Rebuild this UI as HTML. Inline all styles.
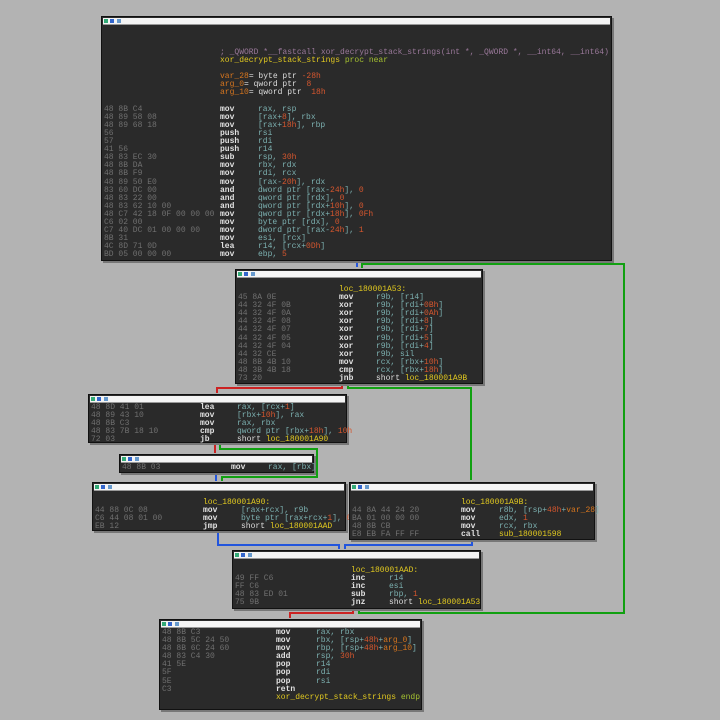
<!DOCTYPE html>
<html><head><meta charset="utf-8"><style>
body{margin:0;width:720px;height:720px;background:#b3b3b3;position:relative;overflow:hidden;font-family:"Liberation Mono",monospace;font-size:8px}
.b{position:absolute;background:#2a2a2a;border:1px solid #111;box-shadow:2px 2px 0 #777}
.t{position:absolute;left:1px;right:1px;top:1px;height:6px;background:#f4f4f4;border-bottom:1px solid #999}
.t i{position:absolute;top:1px;width:4px;height:4px}
.c{position:absolute;left:0;right:0}
.l{position:relative;height:8.1px;line-height:8px;white-space:pre}
.l span{position:absolute;top:0}
.l b{font-weight:normal}
.k{color:#707070}.m{color:#e2e2e2;font-weight:bold}
.r{color:#7cb0b0}.n{color:#d4562e}.y{color:#e0c820}.o{color:#d8761e}.g{color:#a4c030}.p{color:#9a789a}
svg{position:absolute;left:0;top:0}
</style></head><body>
<svg width="720" height="720">
<g fill="none" stroke-width="2">
<path d="M357 261V267" stroke="#2255dd"/>
<path d="M359 609V613H624V264H362V268" stroke="#11a011"/>
<path d="M342 384V388H217V393" stroke="#cc2222"/>
<path d="M348 384V388H471V480" stroke="#11a011"/>
<path d="M215 443V453" stroke="#cc2222"/>
<path d="M220 443V449H317V477H222V481" stroke="#11a011"/>
<path d="M216 472V481" stroke="#2255dd"/>
<path d="M218 531V545H339V549" stroke="#2255dd"/>
<path d="M472 540V545H345V549" stroke="#2255dd"/>
<path d="M353 609V613H290V618" stroke="#cc2222"/>
</g>
</svg>

<div class="b" style="left:101px;top:16px;width:509px;height:243px"><div class="t"><i style="left:1px;background:#3a7"></i><i style="left:7px;background:#36c"></i><i style="left:14px;background:#69c"></i></div>
<div class="c" style="top:32px">
<div class="l"><span class="p" style="left:118px">; _QWORD *__fastcall xor_decrypt_stack_strings(int *, _QWORD *, __int64, __int64)</span></div>
<div class="l"><span class="y" style="left:118px">xor_decrypt_stack_strings <span class="g" style="position:static">proc near</span></span></div>
<div class="l"></div>
<div class="l"><span style="left:118px;color:#ddd"><span class="o" style="position:static">var_28</span>= byte ptr <span class="n" style="position:static">-28h</span></span></div>
<div class="l"><span style="left:118px;color:#ddd"><span class="o" style="position:static">arg_0</span>= qword ptr  <span class="n" style="position:static">8</span></span></div>
<div class="l"><span style="left:118px;color:#ddd"><span class="o" style="position:static">arg_10</span>= qword ptr  <span class="n" style="position:static">18h</span></span></div>
<div class="l"></div>
<div class="l"><span class="k" style="left:2px">48 8B C4</span><span class="m" style="left:118px">mov</span><span class="r" style="left:156px">rax, rsp</span></div>
<div class="l"><span class="k" style="left:2px">48 89 58 08</span><span class="m" style="left:118px">mov</span><span class="r" style="left:156px">[rax+<b class="n">8</b>], rbx</span></div>
<div class="l"><span class="k" style="left:2px">48 89 68 18</span><span class="m" style="left:118px">mov</span><span class="r" style="left:156px">[rax+<b class="n">18h</b>], rbp</span></div>
<div class="l"><span class="k" style="left:2px">56</span><span class="m" style="left:118px">push</span><span class="r" style="left:156px">rsi</span></div>
<div class="l"><span class="k" style="left:2px">57</span><span class="m" style="left:118px">push</span><span class="r" style="left:156px">rdi</span></div>
<div class="l"><span class="k" style="left:2px">41 56</span><span class="m" style="left:118px">push</span><span class="r" style="left:156px">r14</span></div>
<div class="l"><span class="k" style="left:2px">48 83 EC 30</span><span class="m" style="left:118px">sub</span><span class="r" style="left:156px">rsp, <b class="n">30h</b></span></div>
<div class="l"><span class="k" style="left:2px">48 8B DA</span><span class="m" style="left:118px">mov</span><span class="r" style="left:156px">rbx, rdx</span></div>
<div class="l"><span class="k" style="left:2px">48 8B F9</span><span class="m" style="left:118px">mov</span><span class="r" style="left:156px">rdi, rcx</span></div>
<div class="l"><span class="k" style="left:2px">48 89 50 E0</span><span class="m" style="left:118px">mov</span><span class="r" style="left:156px">[rax-<b class="n">20h</b>], rdx</span></div>
<div class="l"><span class="k" style="left:2px">83 60 DC 00</span><span class="m" style="left:118px">and</span><span class="r" style="left:156px">dword ptr [rax-<b class="n">24h</b>], <b class="n">0</b></span></div>
<div class="l"><span class="k" style="left:2px">48 83 22 00</span><span class="m" style="left:118px">and</span><span class="r" style="left:156px">qword ptr [rdx], <b class="n">0</b></span></div>
<div class="l"><span class="k" style="left:2px">48 83 62 10 00</span><span class="m" style="left:118px">and</span><span class="r" style="left:156px">qword ptr [rdx+<b class="n">10h</b>], <b class="n">0</b></span></div>
<div class="l"><span class="k" style="left:2px">48 C7 42 18 0F 00 00 00</span><span class="m" style="left:118px">mov</span><span class="r" style="left:156px">qword ptr [rdx+<b class="n">18h</b>], <b class="n">0Fh</b></span></div>
<div class="l"><span class="k" style="left:2px">C6 02 00</span><span class="m" style="left:118px">mov</span><span class="r" style="left:156px">byte ptr [rdx], <b class="n">0</b></span></div>
<div class="l"><span class="k" style="left:2px">C7 40 DC 01 00 00 00</span><span class="m" style="left:118px">mov</span><span class="r" style="left:156px">dword ptr [rax-<b class="n">24h</b>], <b class="n">1</b></span></div>
<div class="l"><span class="k" style="left:2px">8B 31</span><span class="m" style="left:118px">mov</span><span class="r" style="left:156px">esi, [rcx]</span></div>
<div class="l"><span class="k" style="left:2px">4C 8D 71 0D</span><span class="m" style="left:118px">lea</span><span class="r" style="left:156px">r14, [rcx+<b class="n">0Dh</b>]</span></div>
<div class="l"><span class="k" style="left:2px">BD 05 00 00 00</span><span class="m" style="left:118px">mov</span><span class="r" style="left:156px">ebp, <b class="n">5</b></span></div>
</div></div>

<div class="b" style="left:235px;top:269px;width:246px;height:113px"><div class="t"><i style="left:1px;background:#3a7"></i><i style="left:7px;background:#36c"></i><i style="left:14px;background:#69c"></i></div>
<div class="c" style="top:16px">
<div class="l"><span class="y" style="left:103px">loc_180001A53:</span></div>
<div class="l"><span class="k" style="left:2px">45 8A 0E</span><span class="m" style="left:103px">mov</span><span class="r" style="left:140px">r9b, [r14]</span></div>
<div class="l"><span class="k" style="left:2px">44 32 4F 0B</span><span class="m" style="left:103px">xor</span><span class="r" style="left:140px">r9b, [rdi+<b class="n">0Bh</b>]</span></div>
<div class="l"><span class="k" style="left:2px">44 32 4F 0A</span><span class="m" style="left:103px">xor</span><span class="r" style="left:140px">r9b, [rdi+<b class="n">0Ah</b>]</span></div>
<div class="l"><span class="k" style="left:2px">44 32 4F 08</span><span class="m" style="left:103px">xor</span><span class="r" style="left:140px">r9b, [rdi+<b class="n">8</b>]</span></div>
<div class="l"><span class="k" style="left:2px">44 32 4F 07</span><span class="m" style="left:103px">xor</span><span class="r" style="left:140px">r9b, [rdi+<b class="n">7</b>]</span></div>
<div class="l"><span class="k" style="left:2px">44 32 4F 05</span><span class="m" style="left:103px">xor</span><span class="r" style="left:140px">r9b, [rdi+<b class="n">5</b>]</span></div>
<div class="l"><span class="k" style="left:2px">44 32 4F 04</span><span class="m" style="left:103px">xor</span><span class="r" style="left:140px">r9b, [rdi+<b class="n">4</b>]</span></div>
<div class="l"><span class="k" style="left:2px">44 32 CE</span><span class="m" style="left:103px">xor</span><span class="r" style="left:140px">r9b, sil</span></div>
<div class="l"><span class="k" style="left:2px">48 8B 4B 10</span><span class="m" style="left:103px">mov</span><span class="r" style="left:140px">rcx, [rbx+<b class="n">10h</b>]</span></div>
<div class="l"><span class="k" style="left:2px">48 3B 4B 18</span><span class="m" style="left:103px">cmp</span><span class="r" style="left:140px">rcx, [rbx+<b class="n">18h</b>]</span></div>
<div class="l"><span class="k" style="left:2px">73 20</span><span class="m" style="left:103px">jnb</span><span style="left:140px;color:#ddd">short <b class="y">loc_180001A9B</b></span></div>
</div></div>

<div class="b" style="left:88px;top:394px;width:257px;height:47px"><div class="t"><i style="left:1px;background:#3a7"></i><i style="left:7px;background:#36c"></i><i style="left:14px;background:#69c"></i></div>
<div class="c" style="top:9px">
<div class="l"><span class="k" style="left:2px">48 8D 41 01</span><span class="m" style="left:111px">lea</span><span class="r" style="left:148px">rax, [rcx+<b class="n">1</b>]</span></div>
<div class="l"><span class="k" style="left:2px">48 89 43 10</span><span class="m" style="left:111px">mov</span><span class="r" style="left:148px">[rbx+<b class="n">10h</b>], rax</span></div>
<div class="l"><span class="k" style="left:2px">48 8B C3</span><span class="m" style="left:111px">mov</span><span class="r" style="left:148px">rax, rbx</span></div>
<div class="l"><span class="k" style="left:2px">48 83 7B 18 10</span><span class="m" style="left:111px">cmp</span><span class="r" style="left:148px">qword ptr [rbx+<b class="n">18h</b>], <b class="n">10h</b></span></div>
<div class="l"><span class="k" style="left:2px">72 03</span><span class="m" style="left:111px">jb</span><span style="left:148px;color:#ddd">short <b class="y">loc_180001A90</b></span></div>
</div></div>

<div class="b" style="left:119px;top:454px;width:193px;height:17px"><div class="t"><i style="left:1px;background:#3a7"></i><i style="left:7px;background:#36c"></i><i style="left:14px;background:#69c"></i></div>
<div class="c" style="top:9px">
<div class="l"><span class="k" style="left:2px">48 8B 03</span><span class="m" style="left:111px">mov</span><span class="r" style="left:148px">rax, [rbx]</span></div>
</div></div>

<div class="b" style="left:92px;top:482px;width:252px;height:47px"><div class="t"><i style="left:1px;background:#3a7"></i><i style="left:7px;background:#36c"></i><i style="left:14px;background:#69c"></i></div>
<div class="c" style="top:16px">
<div class="l"><span class="y" style="left:110px">loc_180001A90:</span></div>
<div class="l"><span class="k" style="left:2px">44 88 0C 08</span><span class="m" style="left:110px">mov</span><span class="r" style="left:148px">[rax+rcx], r9b</span></div>
<div class="l"><span class="k" style="left:2px">C6 44 08 01 00</span><span class="m" style="left:110px">mov</span><span class="r" style="left:148px">byte ptr [rax+rcx+<b class="n">1</b>], <b class="n">0</b></span></div>
<div class="l"><span class="k" style="left:2px">EB 12</span><span class="m" style="left:110px">jmp</span><span style="left:148px;color:#ddd">short <b class="y">loc_180001AAD</b></span></div>
</div></div>

<div class="b" style="left:349px;top:482px;width:244px;height:56px"><div class="t"><i style="left:1px;background:#3a7"></i><i style="left:7px;background:#36c"></i><i style="left:14px;background:#69c"></i></div>
<div class="c" style="top:16px">
<div class="l"><span class="y" style="left:111px">loc_180001A9B:</span></div>
<div class="l"><span class="k" style="left:2px">44 8A 44 24 20</span><span class="m" style="left:111px">mov</span><span class="r" style="left:149px">r8b, [rsp+<b class="n">48h</b>+<b class="o">var_28</b>]</span></div>
<div class="l"><span class="k" style="left:2px">BA 01 00 00 00</span><span class="m" style="left:111px">mov</span><span class="r" style="left:149px">edx, <b class="n">1</b></span></div>
<div class="l"><span class="k" style="left:2px">48 8B CB</span><span class="m" style="left:111px">mov</span><span class="r" style="left:149px">rcx, rbx</span></div>
<div class="l"><span class="k" style="left:2px">E8 EB FA FF FF</span><span class="m" style="left:111px">call</span><span class="y" style="left:149px">sub_180001598</span></div>
</div></div>

<div class="b" style="left:232px;top:550px;width:247px;height:57px"><div class="t"><i style="left:1px;background:#3a7"></i><i style="left:7px;background:#36c"></i><i style="left:14px;background:#69c"></i></div>
<div class="c" style="top:16px">
<div class="l"><span class="y" style="left:118px">loc_180001AAD:</span></div>
<div class="l"><span class="k" style="left:2px">49 FF C6</span><span class="m" style="left:118px">inc</span><span class="r" style="left:156px">r14</span></div>
<div class="l"><span class="k" style="left:2px">FF C6</span><span class="m" style="left:118px">inc</span><span class="r" style="left:156px">esi</span></div>
<div class="l"><span class="k" style="left:2px">48 83 ED 01</span><span class="m" style="left:118px">sub</span><span class="r" style="left:156px">rbp, <b class="n">1</b></span></div>
<div class="l"><span class="k" style="left:2px">75 9B</span><span class="m" style="left:118px">jnz</span><span style="left:156px;color:#ddd">short <b class="y">loc_180001A53</b></span></div>
</div></div>

<div class="b" style="left:159px;top:619px;width:261px;height:89px"><div class="t"><i style="left:1px;background:#3a7"></i><i style="left:7px;background:#36c"></i><i style="left:14px;background:#69c"></i></div>
<div class="c" style="top:9px">
<div class="l"><span class="k" style="left:2px">48 8B C3</span><span class="m" style="left:116px">mov</span><span class="r" style="left:156px">rax, rbx</span></div>
<div class="l"><span class="k" style="left:2px">48 8B 5C 24 50</span><span class="m" style="left:116px">mov</span><span class="r" style="left:156px">rbx, [rsp+<b class="n">48h</b>+<b class="o">arg_0</b>]</span></div>
<div class="l"><span class="k" style="left:2px">48 8B 6C 24 60</span><span class="m" style="left:116px">mov</span><span class="r" style="left:156px">rbp, [rsp+<b class="n">48h</b>+<b class="o">arg_10</b>]</span></div>
<div class="l"><span class="k" style="left:2px">48 83 C4 30</span><span class="m" style="left:116px">add</span><span class="r" style="left:156px">rsp, <b class="n">30h</b></span></div>
<div class="l"><span class="k" style="left:2px">41 5E</span><span class="m" style="left:116px">pop</span><span class="r" style="left:156px">r14</span></div>
<div class="l"><span class="k" style="left:2px">5F</span><span class="m" style="left:116px">pop</span><span class="r" style="left:156px">rdi</span></div>
<div class="l"><span class="k" style="left:2px">5E</span><span class="m" style="left:116px">pop</span><span class="r" style="left:156px">rsi</span></div>
<div class="l"><span class="k" style="left:2px">C3</span><span class="m" style="left:116px">retn</span></div>
<div class="l"><span class="y" style="left:116px">xor_decrypt_stack_strings <span class="g" style="position:static">endp</span></span></div>
</div></div>
</body></html>
